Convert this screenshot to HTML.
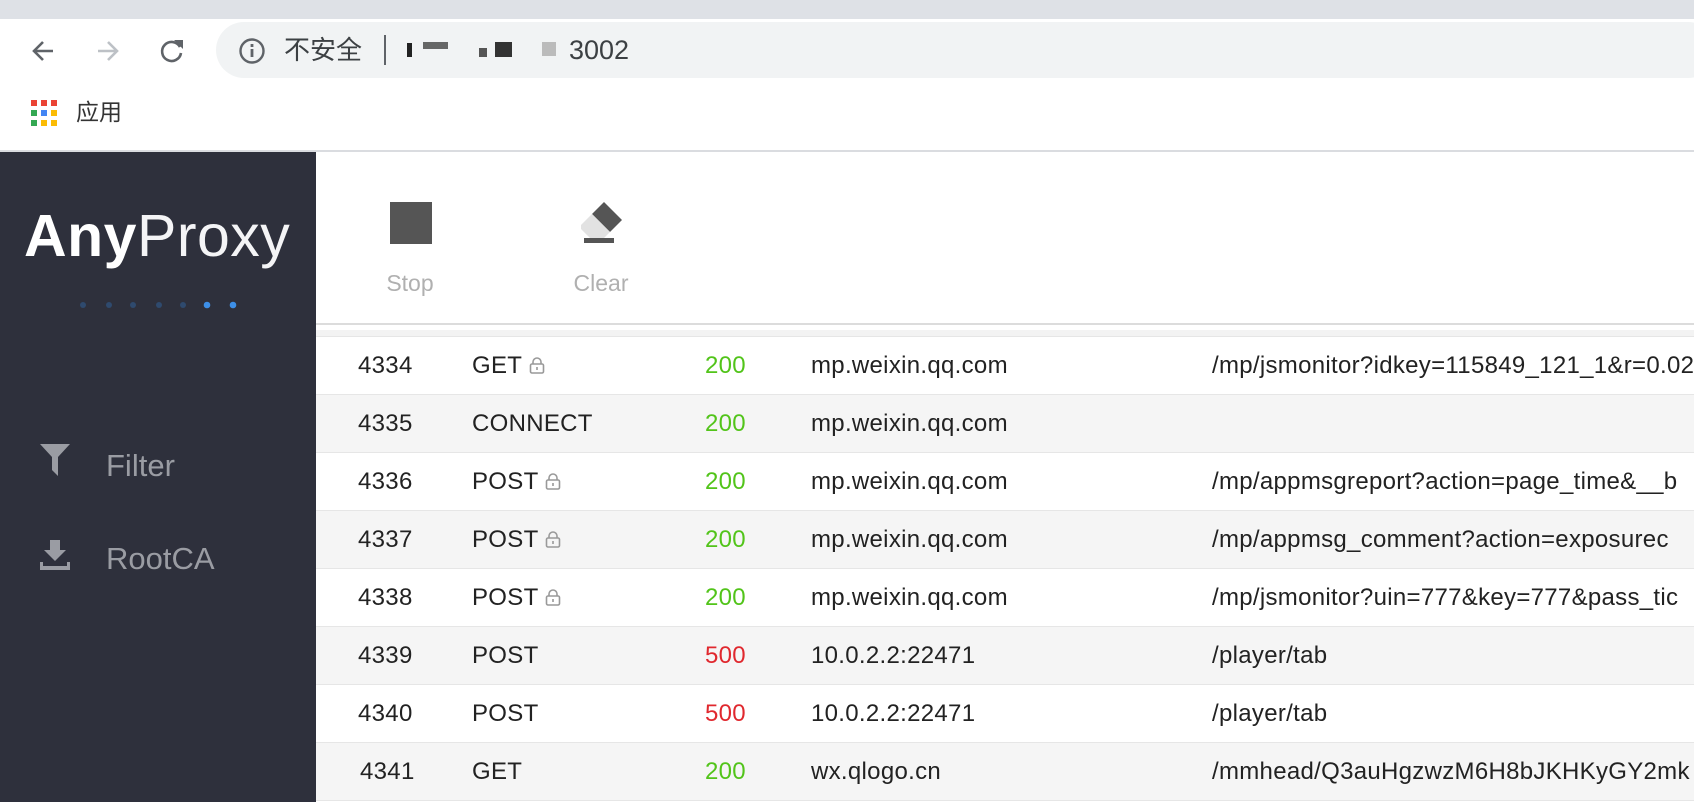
<!DOCTYPE html>
<html><head><meta charset="utf-8"><style>
*{margin:0;padding:0;box-sizing:border-box}
body{width:1694px;height:802px;overflow:hidden;background:#fff;font-family:"Liberation Sans","Noto Sans CJK SC",sans-serif;position:relative}
.abs{position:absolute}
.row{position:absolute;left:316px;width:1378px;height:58px;border-bottom:1px solid #e6e6e6;font-size:24px;letter-spacing:0.3px;color:#222;overflow:hidden}
.row span{position:absolute;top:50%;transform:translateY(-50%);white-space:nowrap}
.g{color:#52c41a}.r{color:#e0282e}
.gray{background:#f5f5f5}
</style></head><body>
<div class="abs" style="left:0;top:0;width:1694px;height:19px;background:#dee1e6"></div>
<svg class="abs" style="left:28px;top:36px" width="30" height="30" viewBox="0 0 30 30"><path d="M25 15H7M15 6l-9 9 9 9" stroke="#5f6368" stroke-width="2.6" fill="none"/></svg>
<svg class="abs" style="left:93px;top:36px" width="30" height="30" viewBox="0 0 30 30"><path d="M5 15h18M15 6l9 9-9 9" stroke="#bdc1c6" stroke-width="2.6" fill="none"/></svg>
<svg class="abs" style="left:157px;top:36px" width="30" height="30" viewBox="0 0 30 30"><path d="M23 11A9.5 9.5 0 1 0 24 17" stroke="#5f6368" stroke-width="2.6" fill="none"/><path d="M17 4h9v9z" fill="#5f6368"/></svg>
<div class="abs" style="left:216px;top:22px;width:1500px;height:56px;border-radius:28px;background:#f1f3f4"></div>
<svg class="abs" style="left:238px;top:37px" width="28" height="28" viewBox="0 0 28 28"><circle cx="14" cy="14" r="11.5" stroke="#5f6368" stroke-width="2.4" fill="none"/><rect x="12.6" y="12" width="2.8" height="8" fill="#5f6368"/><rect x="12.6" y="7" width="2.8" height="3" fill="#5f6368"/></svg>
<div class="abs" style="left:284px;top:34px;font-size:26px;color:#3c4043;line-height:32px">不安全</div>
<div class="abs" style="left:384px;top:35px;width:2px;height:30px;background:#5f6368"></div>
<div class="abs" style="left:407px;top:43px;width:5px;height:14px;background:#222"></div>
<div class="abs" style="left:423px;top:42px;width:25px;height:7px;background:#444;opacity:.8"></div>
<div class="abs" style="left:479px;top:48px;width:8px;height:9px;background:#555"></div>
<div class="abs" style="left:495px;top:42px;width:17px;height:15px;background:#333"></div>
<div class="abs" style="left:542px;top:42px;width:14px;height:14px;background:#bbb"></div>
<div class="abs" style="left:569px;top:33px;font-size:27px;color:#3c4043;line-height:34px">3002</div>
<svg class="abs" style="left:31px;top:100px" width="26" height="26" viewBox="0 0 26 26">
<rect x="0" y="0" width="6" height="6" fill="#ea4335"/><rect x="10" y="0" width="6" height="6" fill="#ea4335"/><rect x="20" y="0" width="6" height="6" fill="#ea4335"/>
<rect x="0" y="10" width="6" height="6" fill="#34a853"/><rect x="10" y="10" width="6" height="6" fill="#4285f4"/><rect x="20" y="10" width="6" height="6" fill="#fbbc05"/>
<rect x="0" y="20" width="6" height="6" fill="#34a853"/><rect x="10" y="20" width="6" height="6" fill="#fbbc05"/><rect x="20" y="20" width="6" height="6" fill="#fbbc05"/></svg>
<div class="abs" style="left:76px;top:98px;font-size:23px;color:#333;line-height:28px">应用</div>
<div class="abs" style="left:0;top:150px;width:1694px;height:2px;background:#dadce0"></div>
<div class="abs" style="left:0;top:152px;width:316px;height:650px;background:#2e303c"></div>
<div class="abs" style="left:24px;top:201px;font-size:59px;color:#fff;line-height:70px;white-space:nowrap;letter-spacing:0.5px"><b>Any</b><span style="font-weight:300;color:#f4f4f6">Proxy</span></div>
<svg class="abs" style="left:0;top:300px" width="316" height="12">
<g fill="#2f4a6e"><circle cx="83" cy="5" r="3"/><circle cx="109" cy="5" r="3"/><circle cx="133" cy="5" r="3"/><circle cx="159" cy="5" r="3"/><circle cx="183" cy="5" r="3"/></g>
<g fill="#3d8fe8"><circle cx="207" cy="5" r="3.3"/><circle cx="233" cy="5" r="3.3"/></g></svg>
<svg class="abs" style="left:40px;top:444px" width="30" height="33" viewBox="0 0 30 33"><path d="M0 0H30L18 13V32L12 26V13Z" fill="#9a9ca3"/></svg>
<div class="abs" style="left:106px;top:448px;font-size:31px;color:#9a9ca3;line-height:36px">Filter</div>
<svg class="abs" style="left:40px;top:540px" width="30" height="30" viewBox="0 0 30 30"><path d="M10 0h10v10h6L15 21 4 10h6z" fill="#9a9ca3"/><path d="M0 22h3v4h24v-4h3v8H0z" fill="#9a9ca3"/></svg>
<div class="abs" style="left:106px;top:541px;font-size:31px;color:#9a9ca3;line-height:36px">RootCA</div>
<div class="abs" style="left:390px;top:202px;width:42px;height:42px;background:#555"></div>
<div class="abs" style="left:370px;top:270px;width:80px;text-align:center;font-size:23px;color:#b0b0b0">Stop</div>
<svg class="abs" style="left:578px;top:201px" width="46" height="44" viewBox="0 0 46 44">
<path d="M26 1L44 19 32 31 14 13z" fill="#555"/><path d="M14 13L32 31 26 37H12L3 28V24z" fill="#e2e2e2"/><rect x="6" y="37" width="30" height="5" fill="#555"/></svg>
<div class="abs" style="left:561px;top:270px;width:80px;text-align:center;font-size:23px;color:#b0b0b0">Clear</div>
<div class="abs" style="left:316px;top:323px;width:1378px;height:2px;background:#dcdcdc"></div>
<div class="abs" style="left:316px;top:330px;width:1378px;height:7px;background:#f3f3f3;border-bottom:1px solid #e6e6e6"></div>
<div class="row" style="top:337px"><span style="left:42px">4334</span><span style="left:156px">GET <svg width="16" height="17" viewBox="0 0 16 17" style="vertical-align:-1px"><path d="M4 7V5a4 4 0 0 1 8 0v2" stroke="#999" stroke-width="1.6" fill="none"/><rect x="1.5" y="7" width="13" height="9" rx="1.5" stroke="#999" stroke-width="1.6" fill="none"/><rect x="7.2" y="10" width="1.6" height="3" fill="#999"/></svg></span><span class="g" style="left:389px">200</span><span style="left:495px">mp.weixin.qq.com</span><span style="left:896px">/mp/jsmonitor?idkey=115849_121_1&amp;r=0.02</span></div>
<div class="row gray" style="top:395px"><span style="left:42px">4335</span><span style="left:156px">CONNECT</span><span class="g" style="left:389px">200</span><span style="left:495px">mp.weixin.qq.com</span></div>
<div class="row" style="top:453px"><span style="left:42px">4336</span><span style="left:156px">POST <svg width="16" height="17" viewBox="0 0 16 17" style="vertical-align:-1px"><path d="M4 7V5a4 4 0 0 1 8 0v2" stroke="#999" stroke-width="1.6" fill="none"/><rect x="1.5" y="7" width="13" height="9" rx="1.5" stroke="#999" stroke-width="1.6" fill="none"/><rect x="7.2" y="10" width="1.6" height="3" fill="#999"/></svg></span><span class="g" style="left:389px">200</span><span style="left:495px">mp.weixin.qq.com</span><span style="left:896px">/mp/appmsgreport?action=page_time&amp;__b</span></div>
<div class="row gray" style="top:511px"><span style="left:42px">4337</span><span style="left:156px">POST <svg width="16" height="17" viewBox="0 0 16 17" style="vertical-align:-1px"><path d="M4 7V5a4 4 0 0 1 8 0v2" stroke="#999" stroke-width="1.6" fill="none"/><rect x="1.5" y="7" width="13" height="9" rx="1.5" stroke="#999" stroke-width="1.6" fill="none"/><rect x="7.2" y="10" width="1.6" height="3" fill="#999"/></svg></span><span class="g" style="left:389px">200</span><span style="left:495px">mp.weixin.qq.com</span><span style="left:896px">/mp/appmsg_comment?action=exposurec</span></div>
<div class="row" style="top:569px"><span style="left:42px">4338</span><span style="left:156px">POST <svg width="16" height="17" viewBox="0 0 16 17" style="vertical-align:-1px"><path d="M4 7V5a4 4 0 0 1 8 0v2" stroke="#999" stroke-width="1.6" fill="none"/><rect x="1.5" y="7" width="13" height="9" rx="1.5" stroke="#999" stroke-width="1.6" fill="none"/><rect x="7.2" y="10" width="1.6" height="3" fill="#999"/></svg></span><span class="g" style="left:389px">200</span><span style="left:495px">mp.weixin.qq.com</span><span style="left:896px">/mp/jsmonitor?uin=777&amp;key=777&amp;pass_tic</span></div>
<div class="row gray" style="top:627px"><span style="left:42px">4339</span><span style="left:156px">POST</span><span class="r" style="left:389px">500</span><span style="left:495px">10.0.2.2:22471</span><span style="left:896px">/player/tab</span></div>
<div class="row" style="top:685px"><span style="left:42px">4340</span><span style="left:156px">POST</span><span class="r" style="left:389px">500</span><span style="left:495px">10.0.2.2:22471</span><span style="left:896px">/player/tab</span></div>
<div class="row gray" style="top:743px"><span style="left:44px">4341</span><span style="left:156px">GET</span><span class="g" style="left:389px">200</span><span style="left:495px">wx.qlogo.cn</span><span style="left:896px">/mmhead/Q3auHgzwzM6H8bJKHKyGY2mk</span></div>
</body></html>
